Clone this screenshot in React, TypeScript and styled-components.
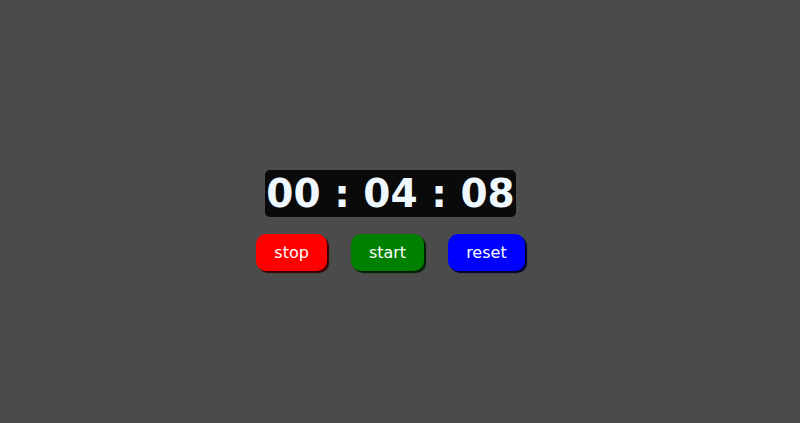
import styled, { createGlobalStyle } from "styled-components";

const GlobalStyle = createGlobalStyle`
  html, body {
    margin: 0;
    padding: 0;
    background-color: #4b4b4b;
    font-family: "DejaVu Sans", sans-serif;
  }
`

const Page = styled.div`
  width: 800px;
  height: 423px;
  display: flex;
  flex-direction: column;
  align-items: center;
  justify-content: center;
  padding-right: 19px;
  padding-top: 17px;
  box-sizing: border-box;
`

const Display = styled.div`
  background-color: #0a0a0a;
  color: #f0f8ff;
  font-size: 39px;
  font-weight: bold;
  line-height: 47px;
  padding: 0 1px;
  border-radius: 5px;
`

const Controls = styled.div`
  display: flex;
  gap: 24px;
  margin-top: 17px;
`

const Button = styled.button<{ $bg: string; $shadow: string }>`
  font-family: "DejaVu Sans", sans-serif;
  font-size: 16px;
  color: #fff;
  background-color: ${p => p.$bg};
  border: none;
  border-radius: 10px;
  padding: 9px 18px;
  box-shadow: 2px 2px 1px ${p => p.$shadow};
  cursor: pointer;
`

export default function App() {
    return (
        <>
            <GlobalStyle/>
            <Page>
                <Display>00 : 04 : 08</Display>
                <Controls>
                    <Button $bg="#ff0000" $shadow="#3a0000">stop</Button>
                    <Button $bg="#008000" $shadow="#002000">start</Button>
                    <Button $bg="#0000ff" $shadow="#000030">reset</Button>
                </Controls>
            </Page>
        </>
    );
}
